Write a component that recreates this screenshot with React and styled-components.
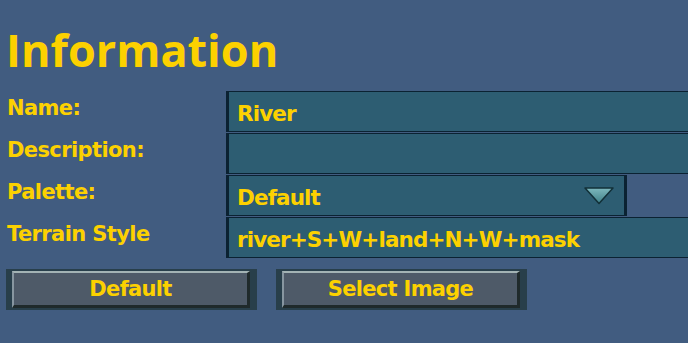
import React from 'react';
import styled, { createGlobalStyle } from 'styled-components';

const GlobalStyle = createGlobalStyle`
  html, body {
    margin: 0;
    padding: 0;
    background: #415c80;
    width: 688px;
    height: 343px;
    overflow: hidden;
  }
  body {
    font-family: "DejaVu Sans", "Open Sans", sans-serif;
    font-weight: 700;
    color: #fcd100;
  }
`;

const fields = [
  { label: 'Name:', value: 'River' },
  { label: 'Description:', value: '' },
  { label: 'Palette:', value: 'Default', select: true },
  { label: 'Terrain Style', value: 'river+S+W+land+N+W+mask' },
];

const App = () => {
  return (
    <>
      <GlobalStyle />
      <Page>
        <Title>Information</Title>
        <Form>
          {fields.map((f) => (
            <Row key={f.label}>
              <Label>{f.label}</Label>
              <FieldCell>
                <Field $select={f.select}>
                  <FieldText>{f.value}</FieldText>
                  {f.select && (
                    <Arrow width="30" height="18" viewBox="0 0 30 18">
                      <defs>
                        <linearGradient id="arrowFill" x1="0" y1="0" x2="0" y2="1">
                          <stop offset="0" stopColor="#7db8bd" />
                          <stop offset="1" stopColor="#3f8088" />
                        </linearGradient>
                      </defs>
                      <path d="M1 1 L29 1 L15 16.5 Z" fill="url(#arrowFill)" stroke="#123038" strokeWidth="1.5" strokeLinejoin="round" />
                    </Arrow>
                  )}
                </Field>
              </FieldCell>
            </Row>
          ))}
        </Form>
        <Buttons>
          <ButtonFrame>
            <Button>Default</Button>
          </ButtonFrame>
          <ButtonFrame>
            <Button>Select Image</Button>
          </ButtonFrame>
        </Buttons>
      </Page>
    </>
  );
};

const Page = styled.div`
  display: flex;
  flex-direction: column;
  width: 688px;
  height: 343px;
`;

const Title = styled.h1`
  margin: 0;
  height: 91px;
  padding-left: 6px;
  box-sizing: border-box;
  font-family: "Open Sans", "DejaVu Sans", sans-serif;
  font-size: 45px;
  line-height: 1;
  padding-top: 27px;
  font-weight: 700;
  color: #fcd100;
`;

const Form = styled.div`
  display: flex;
  flex-direction: column;
  gap: 1px;
`;

const Row = styled.div`
  display: grid;
  grid-template-columns: 226px 1fr;
  height: 41px;
`;

const Label = styled.div`
  padding-left: 7px;
  padding-top: 4px;
  font-size: 21px;
  letter-spacing: -0.6px;
  line-height: 26px;
`;

const FieldCell = styled.div`
  display: flex;
`;

const Field = styled.div`
  display: flex;
  align-items: center;
  box-sizing: border-box;
  width: ${(p) => (p.$select ? '401px' : '100%')};
  height: 41px;
  background: #2d5d72;
  border-top: 1px solid #0b2232;
  border-bottom: 1px solid #0b2232;
  border-left: 3px solid #0b2232;
  border-right: ${(p) => (p.$select ? '3px solid #0b2232' : 'none')};
  padding-left: 8px;
  padding-right: 10px;
`;

const FieldText = styled.span`
  flex: 1;
  font-size: 21.5px;
  letter-spacing: -0.9px;
  line-height: 26px;
  padding-top: 4px;
  white-space: nowrap;
`;

const Arrow = styled.svg`
  display: block;
  margin-top: 1px;
`;

const Buttons = styled.div`
  display: flex;
  gap: 19px;
  padding-left: 6px;
  margin-top: 11px;
`;

const ButtonFrame = styled.div`
  display: flex;
  box-sizing: border-box;
  width: 251px;
  height: 41px;
  padding: 2px 7px 2px 6px;
  background: #283f4b;
`;

const Button = styled.div`
  flex: 1;
  display: flex;
  align-items: center;
  justify-content: center;
  box-sizing: border-box;
  background: #4e5a68;
  border-top: 2px solid #a3b3b4;
  border-left: 2px solid #8796a0;
  border-bottom: 3px solid #1f2a2b;
  border-right: 3px solid #1f2a2b;
  font-size: 21px;
  letter-spacing: -0.7px;
  line-height: 1;
  color: #fcd100;
  padding-top: 1px;
`;

export default App;
